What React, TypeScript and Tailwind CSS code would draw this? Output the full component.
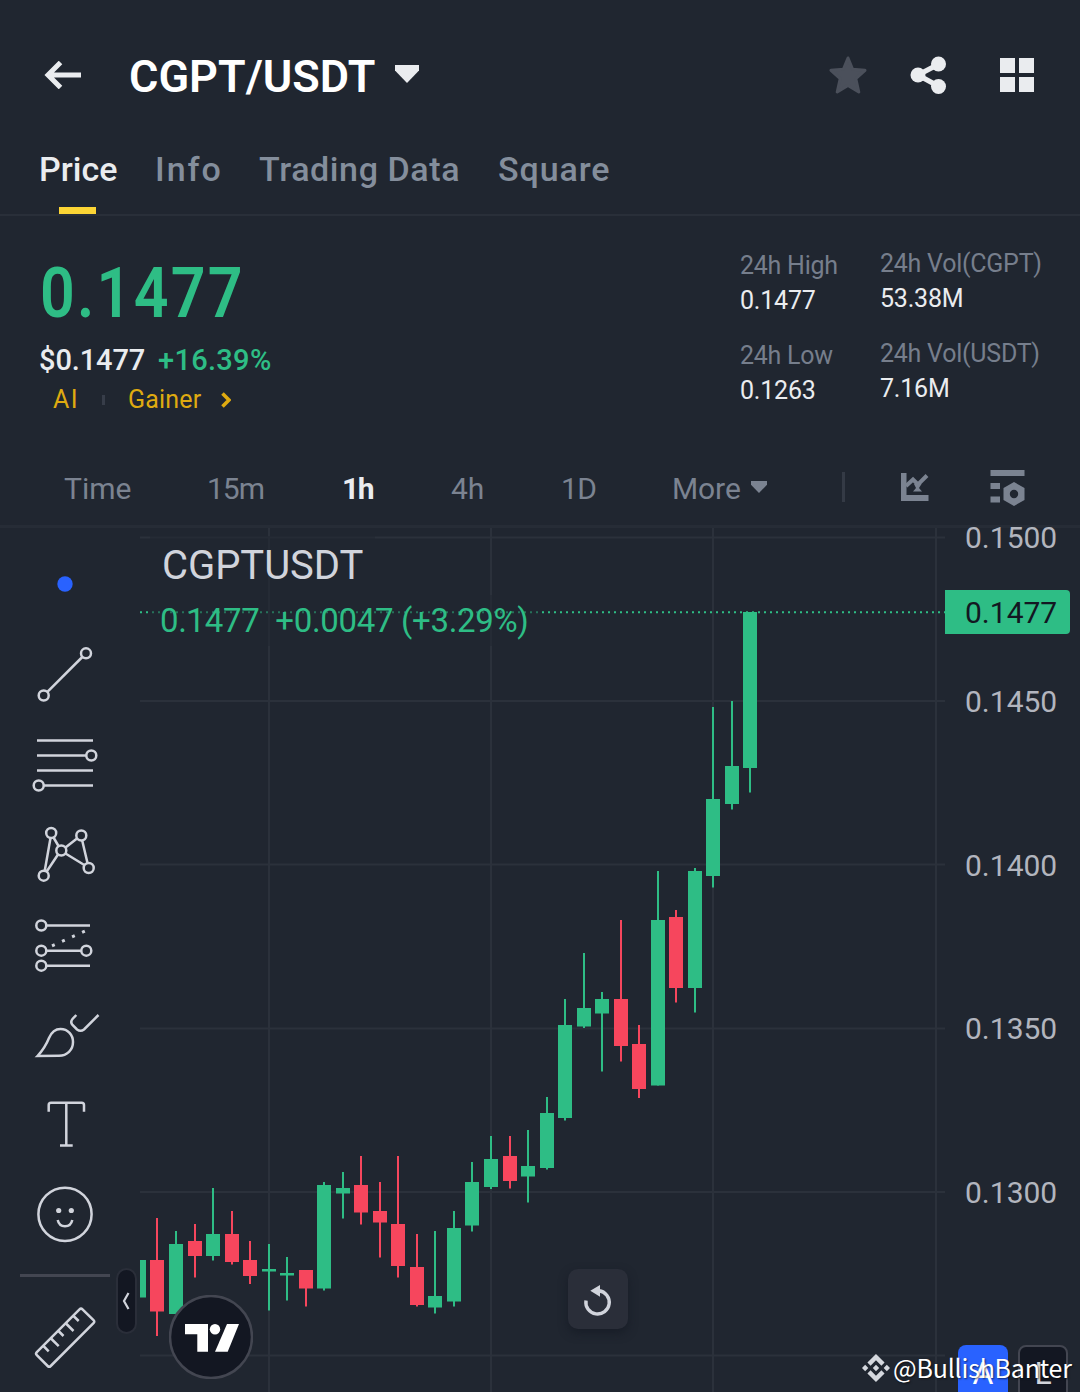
import type { ReactNode } from "react";
import { SiBinance } from "react-icons/si";

type Candle = {
  x: number;
  high: number;
  top: number;
  bottom: number;
  low: number;
  down?: boolean;
};

// y values are in the coordinates of the chart's viewBox
const candles: Candle[] = [
  { x: 157, high: 1218, top: 1260, bottom: 1311.5, low: 1336, down: true },
  { x: 176, high: 1231, top: 1244, bottom: 1314, low: 1314 },
  { x: 195, high: 1224, top: 1241, bottom: 1256, low: 1277.5, down: true },
  { x: 213, high: 1188, top: 1234, bottom: 1256, low: 1260.5 },
  { x: 232, high: 1211, top: 1234, bottom: 1262, low: 1264.5, down: true },
  { x: 250, high: 1241, top: 1260, bottom: 1276, low: 1284, down: true },
  { x: 269, high: 1244, top: 1269, bottom: 1271.5, low: 1310.5 },
  { x: 287, high: 1257, top: 1273, bottom: 1275.5, low: 1300.5 },
  { x: 306, high: 1270, top: 1270, bottom: 1288.5, low: 1306.5, down: true },
  { x: 324, high: 1182, top: 1185, bottom: 1288.5, low: 1290.5 },
  { x: 343, high: 1172, top: 1188, bottom: 1193.5, low: 1218.5 },
  { x: 361, high: 1156, top: 1185, bottom: 1212.5, low: 1224.5, down: true },
  { x: 380, high: 1182, top: 1211, bottom: 1222.5, low: 1257.5, down: true },
  { x: 398, high: 1156, top: 1224, bottom: 1266, low: 1277.5, down: true },
  { x: 417, high: 1234, top: 1267, bottom: 1305, low: 1306.5, down: true },
  { x: 435, high: 1231, top: 1296, bottom: 1307.5, low: 1313.5 },
  { x: 454, high: 1211, top: 1228, bottom: 1301.5, low: 1306.5 },
  { x: 472, high: 1162, top: 1182, bottom: 1225.5, low: 1231.5 },
  { x: 491, high: 1136, top: 1159, bottom: 1187, low: 1189 },
  { x: 510, high: 1136, top: 1156, bottom: 1181, low: 1188.5, down: true },
  { x: 528, high: 1130, top: 1166, bottom: 1176.5, low: 1202.5 },
  { x: 547, high: 1097, top: 1113, bottom: 1168, low: 1169.5 },
  { x: 565, high: 999, top: 1025, bottom: 1118, low: 1120.5 },
  { x: 584, high: 953, top: 1008, bottom: 1026.5, low: 1028 },
  { x: 602, high: 992, top: 999, bottom: 1013.5, low: 1071.5 },
  { x: 621, high: 920, top: 999, bottom: 1046, low: 1061.5, down: true },
  { x: 639, high: 1025, top: 1044, bottom: 1089, low: 1098, down: true },
  { x: 658, high: 871, top: 920, bottom: 1085.5, low: 1085.5 },
  { x: 676, high: 910, top: 917, bottom: 988, low: 1002.5, down: true },
  { x: 695, high: 868, top: 871, bottom: 988, low: 1012.5 },
  { x: 713, high: 707, top: 799, bottom: 876, low: 887.5 },
  { x: 732, high: 701, top: 766, bottom: 804, low: 809.5 },
  { x: 750, high: 612, top: 612, bottom: 768, low: 792.5 },
];

const priceLines = [537.5, 701, 864.5, 1028.5, 1192, 1355.5];
const timeLines = [269, 491, 713, 936];

function Caret({ className }: { className: string }) {
  return (
    <svg className={className} viewBox="0 0 24 18" preserveAspectRatio="none">
      <path d="M0 0H24V5.5L12 18L0 5.5Z" fill="currentColor" />
    </svg>
  );
}

function Header() {
  return (
    <header className="flex h-[150px] items-center pr-[46px] pl-[44px] text-[#eaecef]">
      <svg className="h-7 w-[37px]" viewBox="0 0 37 28" fill="none" stroke="currentColor" strokeWidth="5">
        <path d="M3 14H37M16.5 1.5L4 14L16.5 26.5" />
      </svg>
      <h1 className="mt-[3px] ml-[48px] w-[247px] text-[45px] leading-[52px] font-semibold whitespace-nowrap text-white">
        CGPT/USDT
      </h1>
      <Caret className="-mt-[2px] ml-[19px] h-[18px] w-6" />
      <svg className="ml-auto h-[38px] w-[38px]" viewBox="0 0 38 38">
        <path
          d="M19 2L23.6 13.2L36 14.3L26.8 22.6L29.8 36L19 29.4L8.2 36L11.2 22.6L2 14.3L14.4 13.2Z"
          fill="#4b505b"
          stroke="#4b505b"
          strokeWidth="3"
          strokeLinejoin="round"
        />
      </svg>
      <svg className="-mt-px ml-[43px] h-[38px] w-[37px]" viewBox="0 0 37 38" fill="currentColor">
        <path d="M29 8L8 19L29 30.5" fill="none" stroke="currentColor" strokeWidth="5.2" />
        <circle cx="28.5" cy="8" r="7.5" />
        <circle cx="8" cy="19" r="7.5" />
        <circle cx="28.5" cy="30.5" r="7.5" />
      </svg>
      <div className="-mt-px ml-[53px] grid grid-cols-2 gap-1">
        <span className="h-[15px] w-[15px] bg-current" />
        <span className="h-[15px] w-[15px] bg-current" />
        <span className="h-[15px] w-[15px] bg-current" />
        <span className="h-[15px] w-[15px] bg-current" />
      </div>
    </header>
  );
}

function Tabs() {
  return (
    <nav className="flex h-[66px] border-b-2 border-[#292f39] pt-px pl-[39px] text-[34px] leading-[37px] font-medium whitespace-nowrap text-[#848e9c]">
      <div className="flex w-[116px] flex-col justify-between text-[#eaecef]">
        <span>Price</span>
        <span className="ml-5 h-[7px] w-[37px] bg-[#fcd535]" />
      </div>
      <span className="w-[104px] tracking-[2px]">Info</span>
      <span className="w-[239px] tracking-[0.6px]">Trading Data</span>
      <span className="tracking-[0.9px]">Square</span>
    </nav>
  );
}

function Stat({ label, value }: { label: string; value: string }) {
  return (
    <div className="h-[90px] text-[25px] leading-[35px] whitespace-nowrap">
      <p className="tracking-[-0.25px] text-[#767e8c]">{label}</p>
      <p className="tracking-[-0.2px] text-[#eaecef]">{value}</p>
    </div>
  );
}

function Ticker() {
  return (
    <section className="flex h-[236px] justify-between pl-[39px]">
      <div className="pt-[37px] whitespace-nowrap">
        <p className="ml-px origin-left scale-x-[0.87] text-[70px] leading-[80px] font-semibold tracking-[2.6px] text-[#2ebd85]">
          0.1477
        </p>
        <p className="mt-[9px] flex text-[29px] leading-[37px] font-medium">
          <span className="w-[119px] tracking-[-0.1px] text-[#eaecef]">$0.1477</span>
          <span className="tracking-[0.3px] text-[#2ebd85]">+16.39%</span>
        </p>
        <div className="ml-[14px] flex h-[42px] items-center text-[25px] text-[#dfaa10]">
          <span className="w-[49px] tracking-[1.5px]">AI</span>
          <span className="h-[10px] w-[3px] bg-[#373d49]" />
          <span className="ml-[23px] w-[93px] tracking-[0.2px]">Gainer</span>
          <svg className="h-4 w-[10px]" viewBox="0 0 10 16" fill="none" stroke="currentColor" strokeWidth="3.6">
            <path d="M1.5 1.5L8 8L1.5 14.5" />
          </svg>
        </div>
      </div>
      <div className="flex pt-[30px]">
        <div className="w-[140px] pt-[2px]">
          <Stat label="24h High" value="0.1477" />
          <Stat label="24h Low" value="0.1263" />
        </div>
        <div className="w-[200px]">
          <Stat label="24h Vol(CGPT)" value="53.38M" />
          <Stat label="24h Vol(USDT)" value="7.16M" />
        </div>
      </div>
    </section>
  );
}

function Intervals() {
  return (
    <div className="flex h-[76px] items-center border-b-[3px] border-[#262c36] pl-16 text-[30px] leading-[44px] whitespace-nowrap text-[#7b8391]">
      <span className="w-[143px]">Time</span>
      <span className="w-[135px] tracking-[-1px]">15m</span>
      <span className="w-[109px] font-bold tracking-[-1.5px] text-[#eaecef]">1h</span>
      <span className="w-[110px]">4h</span>
      <span className="w-[111px] tracking-[-0.5px]">1D</span>
      <span className="w-[79px] tracking-[-0.1px]">More</span>
      <Caret className="-mt-[3px] h-3 w-4" />
      <span className="-mt-[3px] ml-[75px] h-[30px] w-[3px] bg-[#343a45]" />
      <svg className="-mt-[4px] ml-[56px] h-7 w-7" viewBox="0 0 28 28" fill="currentColor">
        <path d="M0 0H5.5V22H27.5V28H0Z" />
        <path d="M5 13L12 6.500L17 11.500L26 2.500" fill="none" stroke="currentColor" strokeWidth="4" />
        <path d="M13 11H20.5L18 15L21 18.5H12L15 15Z" />
      </svg>
      <svg className="-mt-px ml-[61px] h-9 w-[35px]" viewBox="0 0 35 36" fill="currentColor">
        <path d="M0.5 0H34.5V6H0.5ZM0.5 13H10V19H0.5ZM0.5 26.5H10V32.5H0.5Z" />
        <path
          fillRule="evenodd"
          d="M24 12L34.5 18V30L24 36L13.5 30V18ZM24 19.8A4.2 4.2 0 1 0 24 28.2A4.2 4.2 0 1 0 24 19.8Z"
        />
      </svg>
    </div>
  );
}

function Tool({ children }: { children: ReactNode }) {
  return (
    <svg
      className="h-[90px] w-[90px] shrink-0"
      viewBox="0 0 90 90"
      fill="none"
      stroke="#d1d4dc"
      strokeWidth="2.5"
    >
      {children}
    </svg>
  );
}

function Toolbar() {
  return (
    <aside className="flex w-[140px] shrink-0 flex-col pt-[11px] pl-5">
      <Tool>
        <circle cx="45" cy="45" r="7.7" fill="#2962ff" stroke="none" />
      </Tool>
      <Tool>
        <circle cx="66" cy="24.3" r="5" />
        <circle cx="23.7" cy="66.5" r="5" />
        <path d="M62.3 28L27.4 62.8" />
      </Tool>
      <Tool>
        <path d="M17 21.5H73M17 36.5H66M17 51.5H73M24 66.5H73" />
        <circle cx="71.3" cy="36.5" r="5" />
        <circle cx="18.7" cy="66.5" r="5" />
      </Tool>
      <Tool>
        <circle cx="31.2" cy="24" r="5" />
        <circle cx="61.3" cy="26.5" r="5" />
        <circle cx="41.3" cy="41.5" r="5" />
        <circle cx="23.7" cy="66.7" r="5" />
        <circle cx="68.7" cy="59" r="5" />
        <path d="M30.5 29L24.8 61.5M33.5 28.5L38.5 37M57 29.5L45.5 38.5M62.2 31.5L67.5 54M45.5 44.5L64.3 56M38 45.5L26.7 62.5" />
      </Tool>
      <Tool>
        <circle cx="21.3" cy="26.5" r="5" />
        <circle cx="21.3" cy="51.7" r="5" />
        <circle cx="66.3" cy="51.7" r="5" />
        <circle cx="21.3" cy="66.7" r="5" />
        <path d="M26.5 26.5H70M26.5 51.7H61M26.5 66.7H70" />
        <path d="M32 46.8L66 31.5" strokeWidth="3" strokeDasharray="3 8" />
      </Tool>
      <Tool>
        <path d="M17.5 67C24 60 27 54 29 49C32 42 36 40 40.5 40C48 40 53 46 53 53C53 61 47 66.7 39 66.7Z" />
        <path d="M56.3 26L52.5 30Q50 33 52.5 36L57 40.5Q60.5 43 64 40.5L78.5 26" />
      </Tool>
      <Tool>
        <path d="M28.7 32.7V26Q28.7 23.7 31 23.7H61.7Q64 23.7 64 26V32.7M46.3 23.7V66.5M40 66.5H52.7" />
      </Tool>
      <Tool>
        <circle cx="45" cy="45.3" r="26.6" />
        <path d="M37.7 51C39.5 59.3 50.5 59.3 52.3 51" />
        <circle cx="38.7" cy="41.5" r="2.6" fill="#d1d4dc" stroke="none" />
        <circle cx="51.3" cy="41.5" r="2.6" fill="#d1d4dc" stroke="none" />
      </Tool>
      <div className="mt-[15px] mb-[15px] h-[3px] w-[90px] shrink-0 bg-[#434651]" />
      <Tool>
        <path
          d="M16.8 60.2L59.5 17.3Q61 15.8 62.5 17.3L73.5 28.2Q75 29.7 73.5 31.2L30.7 74Q29.2 75.5 27.7 74L16.8 63.2Q15.3 61.7 16.8 60.2Z"
          strokeLinejoin="round"
        />
        <path d="M23 53.5L28.7 59.3M30.5 46L38.7 54.2M38 38.5L43.5 44M45.5 31L53.5 39M53 23.5L58.7 29" />
      </Tool>
    </aside>
  );
}

function Chart() {
  return (
    <svg className="block h-[864px] w-[805px]" viewBox="140 528 805 864">
      <g stroke="#2b313b" strokeWidth="2">
        {priceLines.map((y) => (
          <path key={y} d={`M140 ${y}H945`} />
        ))}
        {timeLines.map((x) => (
          <path key={x} d={`M${x} 528V1392`} />
        ))}
      </g>
      <rect x="140" y="1260" width="6" height="37.5" fill="#2ebd85" />
      {candles.map((c) => (
        <g key={c.x} fill={c.down ? "#f6465d" : "#2ebd85"}>
          <rect x={c.x - 1} y={c.high} width="2" height={c.low - c.high} />
          <rect x={c.x - 7} y={c.top} width="14" height={c.bottom - c.top} />
        </g>
      ))}
      <path d="M140 612.3H945" stroke="#2ebd85" strokeWidth="2" strokeDasharray="2 4" />
    </svg>
  );
}

function Legend() {
  return (
    <div className="absolute top-2 left-[10px] flex flex-col items-start whitespace-pre">
      <span className="bg-[#202630]/50 px-3 text-[40px] leading-[59px] tracking-[-0.05px] text-[#d1d4dc]">
        CGPTUSDT
      </span>
      <span className="bg-[#202630]/50 px-[10px] text-[33px] leading-[51px] tracking-[-0.32px] text-[#2ebd85]">
        0.1477{"  "}+0.0047 (+3.29%)
      </span>
    </div>
  );
}

function PriceAxis() {
  return (
    <div className="relative flex-1 text-[30px] leading-[40px] text-[#b2b5be]">
      <div className="-mt-[10px] pl-5">
        <p className="h-[164px]">0.1500</p>
        <p className="h-[163.6px]">0.1450</p>
        <p className="h-[163.6px]">0.1400</p>
        <p className="h-[163.6px]">0.1350</p>
        <p className="h-[163.6px]">0.1300</p>
      </div>
      <div className="absolute top-[62px] left-0 h-11 w-[125px] rounded-r-[4px] bg-[#2ebd85] pl-5 leading-[46px] text-[#131722]">
        0.1477
      </div>
    </div>
  );
}

export default function App() {
  return (
    <div className="relative flex h-[1392px] w-[1080px] flex-col overflow-hidden bg-[#202630] font-[Roboto,sans-serif]">
      <Header />
      <Tabs />
      <Ticker />
      <Intervals />
      <main className="flex h-[864px]">
        <Toolbar />
        <div className="relative w-[805px] shrink-0">
          <Chart />
          <Legend />
          {/* toolbar collapse handle */}
          <div className="absolute top-[740px] -left-[24px] flex h-[66px] w-[21px] items-center justify-center rounded-full border-2 border-[#2a2e39] bg-[#131722]">
            <svg className="-ml-[2px] h-[18px] w-2" viewBox="0 0 8 18" fill="none" stroke="#d1d4dc" strokeWidth="2.2">
              <path d="M6.5 1L2 9L6.5 17" />
            </svg>
          </div>
          <svg className="absolute top-[767px] left-[29px] h-[84px] w-[84px]" viewBox="0 0 84 84">
            <circle cx="42" cy="42" r="41" fill="#131722" stroke="#434651" strokeWidth="2.5" />
            <g fill="#fff">
              <path d="M16 29H39V56.7H28.3V39.3H16Z" />
              <circle cx="46" cy="34.2" r="5.2" />
              <path d="M58 29H70L58.7 56.7H46Z" />
            </g>
          </svg>
          <div className="absolute top-[741px] left-[428px] h-[60px] w-[60px] rounded-[10px] bg-[#2a2e39] shadow-[0_4px_10px_rgba(19,23,34,0.6)]">
            <svg viewBox="0 0 60 60" fill="none">
              <path d="M18 31.5A11.7 11.7 0 1 0 31 21.7" stroke="#d1d4dc" strokeWidth="3.4" />
              <path d="M22.3 21.7L32 16V27.7Z" fill="#d1d4dc" />
            </svg>
          </div>
        </div>
        <PriceAxis />
      </main>
      <div className="absolute top-[1345px] left-[958px] flex gap-[10px] text-center text-[32px] leading-[56px] text-[#d1d4dc]">
        <div className="h-[60px] w-[50px] rounded-[8px] bg-[#2962ff] text-white">A</div>
        <div className="h-[60px] w-[50px] rounded-[8px] border-2 border-[#434651] bg-[#131722] leading-[52px]">
          L
        </div>
      </div>
      <div className="absolute top-[1350px] left-[862px] flex items-center gap-[3px] font-['Noto_Sans_CJK_SC',sans-serif] text-[25px] leading-9 tracking-[-0.2px] whitespace-nowrap text-white [text-shadow:1px_1px_2px_rgba(0,0,0,0.6)]">
        <SiBinance className="h-7 w-7 text-[#d5d8de]" />
        <span className="-mt-px">@BullishBanter</span>
      </div>
    </div>
  );
}
